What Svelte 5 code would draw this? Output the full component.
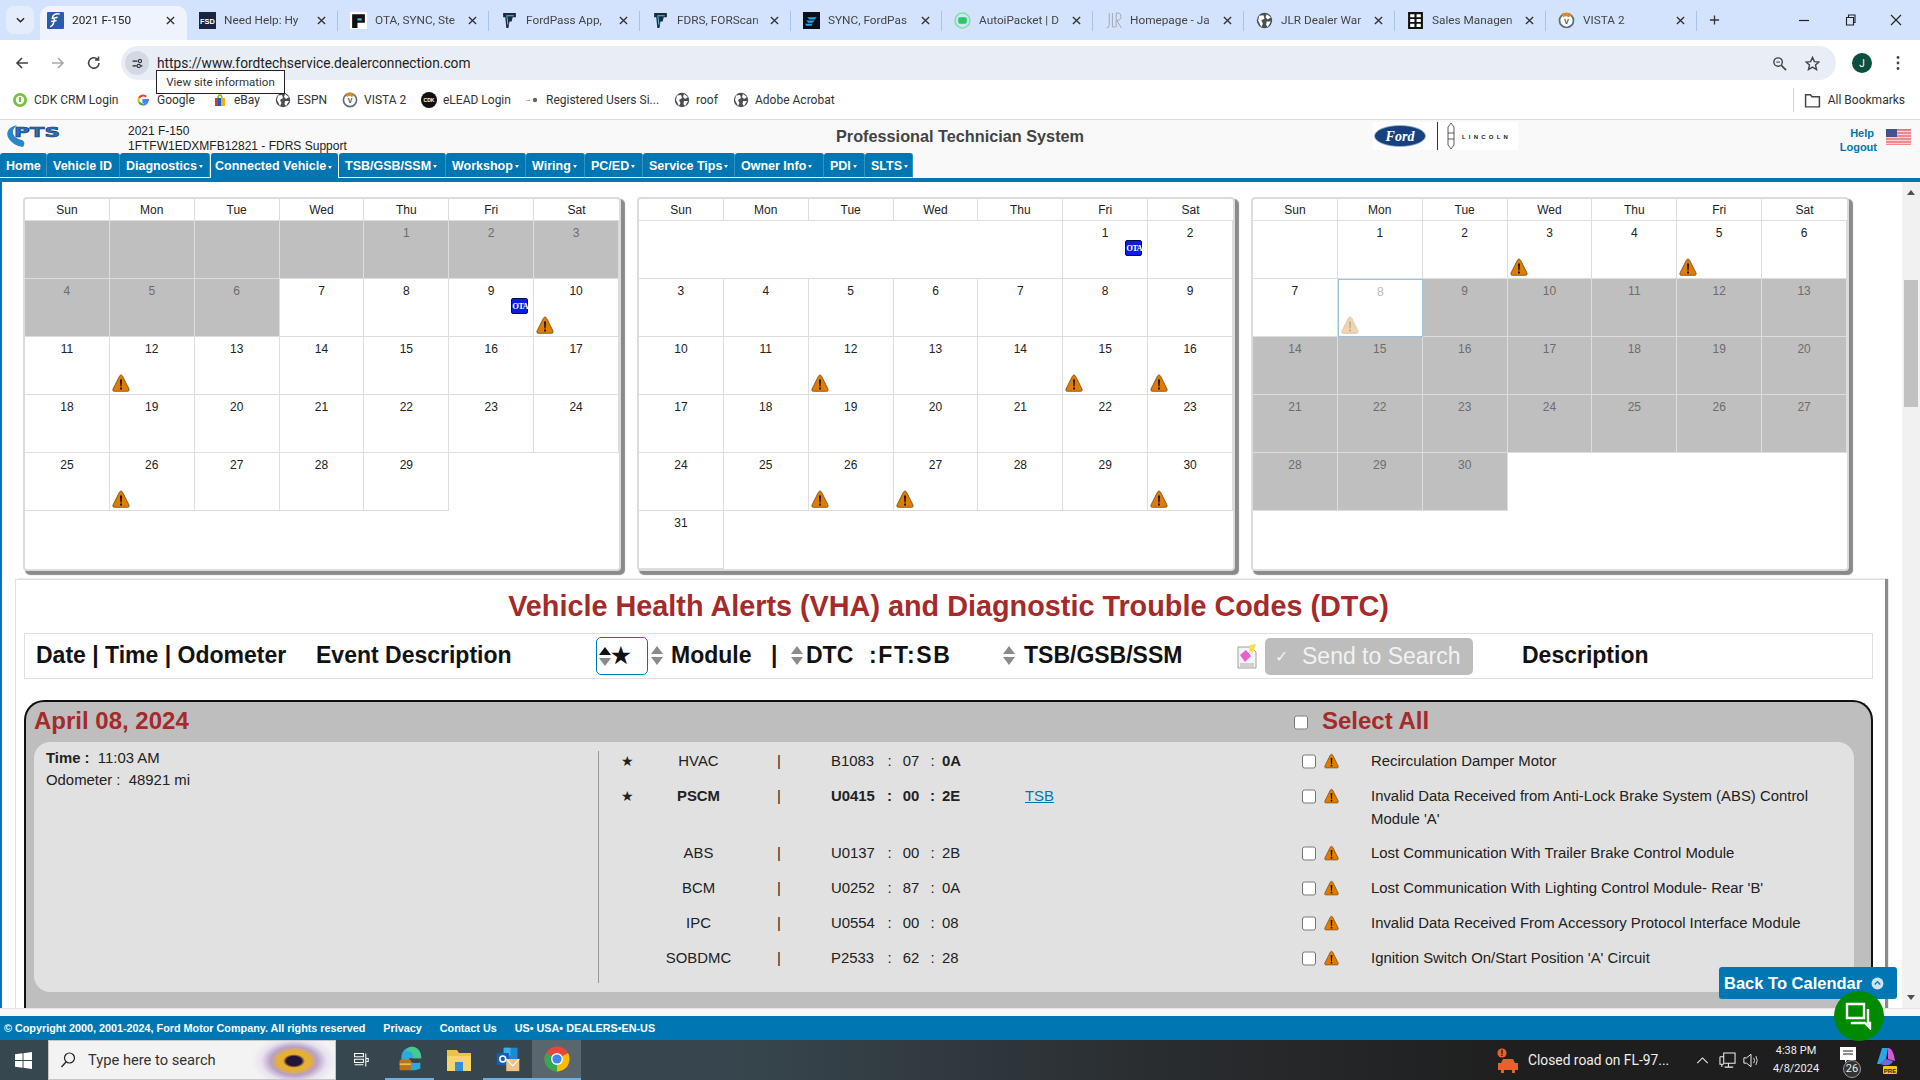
<script>
const tabs = [
  { title: 'Need Help: Hy', fav: 'fsd' },
  { title: 'OTA, SYNC, Ste', fav: 'f-black' },
  { title: 'FordPass App,', fav: 'f-cyan' },
  { title: 'FDRS, FORScan', fav: 'f-cyan' },
  { title: 'SYNC, FordPas', fav: 'sync' },
  { title: 'AutoiPacket | D', fav: 'green' },
  { title: 'Homepage - Ja', fav: 'jlr' },
  { title: 'JLR Dealer War', fav: 'globe' },
  { title: 'Sales Managen', fav: 'grid' },
  { title: 'VISTA 2', fav: 'vista' }
];

const bookmarks = [
  { label: 'CDK CRM Login', fav: 'cdk', w: 123 },
  { label: 'Google', fav: 'google', w: 77 },
  { label: 'eBay', fav: 'ebay', w: 63 },
  { label: 'ESPN', fav: 'globe', w: 67 },
  { label: 'VISTA 2', fav: 'vista', w: 79 },
  { label: 'eLEAD Login', fav: 'cdk-black', w: 103 },
  { label: 'Registered Users Si...', fav: 'dash', w: 150 },
  { label: 'roof', fav: 'globe', w: 59 },
  { label: 'Adobe Acrobat', fav: 'globe', w: 110 }
];

const navItems = [
  { label: 'Home', w: 47 },
  { label: 'Vehicle ID', w: 73 },
  { label: 'Diagnostics', w: 90, caret: true },
  { label: 'Connected Vehicle', w: 129, caret: true, current: true },
  { label: 'TSB/GSB/SSM', w: 107, caret: true },
  { label: 'Workshop', w: 80, caret: true },
  { label: 'Wiring', w: 59, caret: true },
  { label: 'PC/ED', w: 58, caret: true },
  { label: 'Service Tips', w: 92, caret: true },
  { label: 'Owner Info', w: 89, caret: true },
  { label: 'PDI', w: 41, caret: true },
  { label: 'SLTS', w: 48, caret: true }
];

const weekDays = ['Sun', 'Mon', 'Tue', 'Wed', 'Thu', 'Fri', 'Sat'];

function buildMonth(offset, count, isOff, warns, ota, selected, blankOff) {
  const cells = [];
  for (let i = 0; i < offset; i++) {
    cells.push({ day: '', off: blankOff, blank: !blankOff && i < offset - 1 });
  }
  for (let d = 1; d <= count; d++) {
    cells.push({ day: d, off: isOff(d), warn: warns.includes(d), ota: ota.includes(d), selected: d === selected });
  }
  return cells;
}

const months = [
  buildMonth(4, 29, (d) => d < 7, [10, 12, 26], [9], 0, true),
  buildMonth(5, 31, () => false, [12, 15, 16, 26, 27, 30], [1], 0, false),
  buildMonth(1, 30, (d) => d > 8, [3, 5, 8], [], 8, false)
];

const dtcRows = [
  { star: true, module: 'HVAC', dtc: 'B1083', ft: '07', sb: '0A', desc: 'Recirculation Damper Motor', boldSb: true },
  { star: true, module: 'PSCM', dtc: 'U0415', ft: '00', sb: '2E', tsb: true, bold: true, desc: "Invalid Data Received from Anti-Lock Brake System (ABS) Control Module 'A'" },
  { module: 'ABS', dtc: 'U0137', ft: '00', sb: '2B', desc: 'Lost Communication With Trailer Brake Control Module' },
  { module: 'BCM', dtc: 'U0252', ft: '87', sb: '0A', desc: "Lost Communication With Lighting Control Module- Rear 'B'" },
  { module: 'IPC', dtc: 'U0554', ft: '00', sb: '08', desc: 'Invalid Data Received From Accessory Protocol Interface Module' },
  { module: 'SOBDMC', dtc: 'P2533', ft: '62', sb: '28', desc: "Ignition Switch On/Start Position 'A' Circuit" }
];
</script>

{#snippet warnIcon(cls)}
  <svg class={cls} viewBox="0 0 18 18">
    <path d="M9 1 C10 1 10.5 2 11 3 L17 15 C17.5 16.5 16.8 17.3 15.5 17.3 L2.5 17.3 C1.2 17.3 .5 16.5 1 15 L7 3 C7.5 2 8 1 9 1 Z" fill="#e07c00" stroke="#6b4a1c" stroke-width=".8" />
    <path d="M8 5.5 h2 l-.4 7 h-1.2 Z M8.1 13.6 h1.8 v1.9 h-1.8 Z" fill="#111" />
  </svg>
{/snippet}

{#snippet sortArrows(active)}
  <svg class="sort" viewBox="0 0 12 19">
    <path d="M6 0 L12 8 H0 Z" fill={active ? '#111' : '#8a8a8a'} />
    <path d="M6 19 L12 11 H0 Z" fill="#8a8a8a" />
  </svg>
{/snippet}

{#snippet favicon(kind)}
  <svg class="fav" viewBox="0 0 16 16">
    {#if kind === 'ford'}
      <rect width="16" height="16" rx="1" fill="#2a5ca8" />
      <path d="M12 2 C8 1 5 3 5 6 L10 5 M4 9 L9 8 M7 5 C7 9 6 13 3 14" stroke="#fff" stroke-width="1.4" fill="none" />
    {:else if kind === 'fsd'}
      <rect width="16" height="16" fill="#1c2340" />
      <text x="8" y="11" font-size="7" font-weight="700" text-anchor="middle" fill="#fff" font-family="Liberation Sans">FSD</text>
    {:else if kind === 'f-black'}
      <rect width="16" height="16" fill="#fff" />
      <path d="M2 2 H14 V10 H7 V15 H2 Z" fill="#111" />
      <path d="M7 6 H11 V8 H7 Z" fill="#3fc5e8" />
    {:else if kind === 'f-cyan'}
      <path d="M2 1 H14 V5 H11 L10 9 H8 L7 15 H5 L4 5 H2 Z" fill="#1c2b38" />
      <path d="M5 3 H12 V4 H6 L7 12 H6 Z" fill="#48c8e8" />
    {:else if kind === 'sync'}
      <rect width="16" height="16" fill="#0b0f1c" />
      <path d="M4 5 H13 L11 7 H6 Z M3 8 H11 L9 10 H5 Z M2 11 H9 L8 13 H3 Z" fill="#28a8e0" />
    {:else if kind === 'green'}
      <circle cx="8" cy="8" r="7" fill="none" stroke="#7ee2a0" stroke-width="1.5" />
      <rect x="4" y="5" width="8" height="6" rx="1.5" fill="#25c95f" />
    {:else if kind === 'jlr'}
      <path d="M4 1 V12 Q4 15 1.5 15 M7 1 V14 H10 M10.5 14 V1 H13 Q15 1 15 4.5 Q15 8 11 8 L15.5 15" fill="none" stroke="#a2a8b0" stroke-width=".9" />
    {:else if kind === 'globe'}
      <circle cx="8" cy="8" r="7.2" fill="#4b4f54" />
      <path d="M3 3.5 L7 3 L8 6 L5 8 L6.5 11 L5 14 L2 8 Z M10 2 L14 5 L11 7 L9 5 Z M10 9 L14 9 L11 14 L9.5 12 Z" fill="#fff" />
    {:else if kind === 'grid'}
      <rect x="1" width="14" height="16" fill="#111" />
      <path d="M3 2 h4 v3 h-4 Z M9 2 h4 v3 h-4 Z M3 6.5 h4 v3 h-4 Z M9 6.5 h4 v3 h-4 Z M3 11 h4 v3 h-4 Z M9 11 h4 v3 h-4 Z" fill="#fff" />
    {:else if kind === 'vista'}
      <circle cx="8" cy="8" r="6.6" fill="#fff" stroke="#5d6a78" stroke-width="1.6" />
      <path d="M3 2 A8 8 0 0 1 13 3 L10 5 A4 4 0 0 0 5 5 Z" fill="#d98a2b" />
      <text x="8" y="11" font-size="7" font-weight="700" text-anchor="middle" fill="#3b4a5a" font-family="Liberation Sans">V</text>
    {:else if kind === 'cdk'}
      <circle cx="8" cy="8" r="7" fill="#7ac043" />
      <circle cx="8" cy="8" r="4.2" fill="#fff" />
      <path d="M7 5 h2 v5 h-2 Z" fill="#7ac043" />
    {:else if kind === 'google'}
      <path d="M14 8 H8.5 V10 H12 A4.2 4.2 0 0 1 8 12.5" fill="none" stroke="#4285f4" stroke-width="2.2" />
      <path d="M8 12.5 A4.6 4.6 0 0 1 4 10.2" fill="none" stroke="#34a853" stroke-width="2.2" />
      <path d="M4 10.2 A4.6 4.6 0 0 1 4 5.8" fill="none" stroke="#fbbc05" stroke-width="2.2" />
      <path d="M4 5.8 A4.6 4.6 0 0 1 11.2 4.8" fill="none" stroke="#ea4335" stroke-width="2.2" />
    {:else if kind === 'ebay'}
      <path d="M3 6 h4 v8 h-4 Z" fill="#e53238" />
      <path d="M6 6 h4 v8 h-4 Z" fill="#0064d2" />
      <path d="M9 6 h4 v8 h-4 Z" fill="#f5af02" />
      <path d="M6 6 a2 3 0 0 1 4 0" fill="none" stroke="#86b817" stroke-width="1.4" />
    {:else if kind === 'cdk-black'}
      <circle cx="8" cy="8" r="8" fill="#111" />
      <text x="8" y="10" font-size="5" font-weight="700" text-anchor="middle" fill="#fff" font-family="Liberation Sans">CDK</text>
    {:else if kind === 'dash'}
      <path d="M1 9 L6 7.5 L6 9 Z" fill="#9aa0a6" />
      <circle cx="11" cy="8" r="2.2" fill="#5e6b52" />
    {/if}
  </svg>
{/snippet}

{#snippet closeX()}
  <svg class="close" viewBox="0 0 10 10"><path d="M1 1 L9 9 M9 1 L1 9" stroke="#333" stroke-width="1.5" fill="none" /></svg>
{/snippet}

<div class="screen">
  <div class="tabstrip">
    <div class="tabmenu">
      <svg viewBox="0 0 10 6"><path d="M1 1 L5 5 L9 1" fill="none" stroke="#222" stroke-width="1.5" /></svg>
    </div>
    <div class="tab active">
      {@render favicon('ford')}
      <span class="tabtitle">2021 F-150</span>
      {@render closeX()}
    </div>
    {#each tabs as tab}
      <div class="tab">
        {@render favicon(tab.fav)}
        <span class="tabtitle">{tab.title}</span>
        {@render closeX()}
      </div>
    {/each}
    <svg class="newtab" viewBox="0 0 12 12"><path d="M6 1 V11 M1 6 H11" stroke="#333" stroke-width="1.4" /></svg>
    <div class="winctrls">
      <svg viewBox="0 0 12 12"><path d="M1 6.5 H11" stroke="#222" stroke-width="1.2" /></svg>
      <svg viewBox="0 0 12 12"><path d="M2.5 3.5 H9.5 V11 H2.5 Z M4.5 3.5 V1 H11 V8.5 H9.5" fill="none" stroke="#222" stroke-width="1.1" /></svg>
      <svg viewBox="0 0 12 12"><path d="M1 1 L11 11 M11 1 L1 11" stroke="#222" stroke-width="1.1" /></svg>
    </div>
  </div>

  <div class="toolbar">
    <svg class="navicon" viewBox="0 0 16 16"><path d="M14 8 H3 M8 3 L3 8 L8 13" fill="none" stroke="#444" stroke-width="1.6" /></svg>
    <svg class="navicon" viewBox="0 0 16 16"><path d="M2 8 H13 M8 3 L13 8 L8 13" fill="none" stroke="#a9a9a9" stroke-width="1.6" /></svg>
    <svg class="navicon" viewBox="0 0 16 16"><path d="M13 8 A5.2 5.2 0 1 1 11.4 4.2 M12.5 1.5 V5 H9" fill="none" stroke="#444" stroke-width="1.6" /></svg>
    <div class="omnibox">
      <span class="siteinfo">
        <svg viewBox="0 0 16 16"><path d="M2 5 H8 M2 11 H7 M12 11 H14" stroke="#222" stroke-width="1.4" /><circle cx="11" cy="5" r="2" fill="none" stroke="#222" stroke-width="1.3" /><circle cx="9.5" cy="11" r="2" fill="none" stroke="#222" stroke-width="1.3" /></svg>
      </span>
      <span class="url">https://www.fordtechservice.dealerconnection.com</span>
      <svg class="omniicon" viewBox="0 0 16 16"><circle cx="6.5" cy="6.5" r="4.5" fill="none" stroke="#444" stroke-width="1.5" /><path d="M10 10 L15 15" stroke="#444" stroke-width="1.8" /><path d="M4.5 6.5 H8.5" stroke="#444" stroke-width="1.1" /></svg>
      <svg class="omniicon" viewBox="0 0 16 16"><path d="M8 1.5 L10 6 L14.8 6.4 L11.2 9.6 L12.3 14.4 L8 11.8 L3.7 14.4 L4.8 9.6 L1.2 6.4 L6 6 Z" fill="none" stroke="#444" stroke-width="1.5" /></svg>
    </div>
    <span class="avatar">J</span>
    <svg class="menudots" viewBox="0 0 4 16"><circle cx="2" cy="2.5" r="1.4" fill="#444" /><circle cx="2" cy="8" r="1.4" fill="#444" /><circle cx="2" cy="13.5" r="1.4" fill="#444" /></svg>
  </div>

  <div class="bookmarks">
    {#each bookmarks as mark}
      <div class="bookmark" style="width:{mark.w}px">
        {@render favicon(mark.fav)}
        <span>{mark.label}</span>
      </div>
    {/each}
    <div class="allmarks">
      <svg viewBox="0 0 16 16"><path d="M1.5 2.5 H6 L7.5 4.5 H14.5 V14 H1.5 Z" fill="none" stroke="#444" stroke-width="1.4" /></svg>
      <span>All Bookmarks</span>
    </div>
  </div>

  <div class="pageheader">
    <div class="pts">
      <svg viewBox="0 0 56 26">
        <path d="M12 3 C3 5 0 11 4 17 C7 21 11 24 18 25 C20 22 20 20 17 18 C11 17 7 13 8 9 C8 7 10 5 12 3 Z" fill="#2a86c8" />
        <text x="9" y="15" font-size="14" font-weight="700" fill="#2a6fb8" stroke="#12366a" stroke-width=".6" font-family="DejaVu Sans" textLength="46" lengthAdjust="spacingAndGlyphs">PTS</text>
      </svg>
    </div>
    <div class="vehicle">
      <div>2021 F-150</div>
      <div>1FTFW1EDXMFB12821 - FDRS Support</div>
    </div>
    <div class="systitle">Professional Technician System</div>
    <div class="brands">
      <svg class="ford" viewBox="0 0 52 22">
        <ellipse cx="26" cy="11" rx="25.5" ry="10.5" fill="#15427e" stroke="#9bb3cc" stroke-width=".8" />
        <text x="26" y="16" font-size="14" font-style="italic" font-weight="700" text-anchor="middle" fill="#fff" font-family="Liberation Serif">Ford</text>
      </svg>
      <span class="branddivider"></span>
      <svg class="lincoln" viewBox="0 0 72 28">
        <path d="M6 1 L9 5 V23 L6 27 L3 23 V5 Z M3 11 H9 M3 17 H9" fill="none" stroke="#333" stroke-width=".8" />
        <text x="17" y="17" font-size="6" font-weight="700" letter-spacing="3.2" fill="#222" font-family="Liberation Sans">LINCOLN</text>
      </svg>
    </div>
    <div class="helplinks">
      <span class="helplink">Help</span>
      <span>Logout</span>
    </div>
    <svg class="flag" viewBox="0 0 25 16">
      <rect width="25" height="16" fill="#e8727a" />
      <path d="M0 2.5 H25 M0 5.5 H25 M0 8.5 H25 M0 11.5 H25 M0 14.5 H25" stroke="#f5d3d3" stroke-width="1.3" />
      <rect width="11" height="8" fill="#46508c" />
    </svg>
  </div>

  <nav class="nav">
    {#each navItems as item}
      <div class="navitem" class:current={item.current} style="width:{item.w}px">
        {item.label}{#if item.caret}<span class="caret"></span>{/if}
      </div>
    {/each}
  </nav>
  <div class="navrule"></div>

  <div class="middle">
    <div class="page">
      <div class="calendars">
        {#each months as cells}
          <div class="calendar">
            {#each weekDays as name}
              <div class="weekday">{name}</div>
            {/each}
            {#each cells as cell}
              <div class="day" class:off={cell.off} class:blank={cell.blank} class:selected={cell.selected}>
                <span class="num">{cell.day}</span>
                {#if cell.ota}<span class="ota">OTA</span>{/if}
                {#if cell.warn}{@render warnIcon('calwarn')}{/if}
              </div>
            {/each}
          </div>
        {/each}
      </div>

      <section class="vha">
        <h1>Vehicle Health Alerts (VHA) and Diagnostic Trouble Codes (DTC)</h1>
        <div class="sortbar">
          <span>Date | Time | Odometer</span>
          <span>Event Description</span>
          <span class="starbtn">{@render sortArrows(true)}<span class="bigstar">★</span></span>
          <span class="sorted modhead">{@render sortArrows(false)}Module</span>
          <span>|</span>
          <span class="sorted">{@render sortArrows(false)}DTC</span>
          <span class="ftsb">:FT:SB</span>
          <span class="sorted tsbhead">{@render sortArrows(false)}TSB/GSB/SSM</span>
          <svg class="searchdoc" viewBox="0 0 20 26">
            <path d="M1 4 H14 L19 9 V25 H1 Z" fill="#f4f4f4" stroke="#8b8b8b" stroke-width=".8" />
            <path d="M3 12 L9 7 L14 13 L8 19 Z" fill="#e860c8" />
            <path d="M13 2 L19 1 L16 10 L12 8 Z" fill="#f4e14a" />
            <path d="M3 21 H17 M3 23 H17" stroke="#999" stroke-width=".8" />
          </svg>
          <span class="sendbtn"><span class="tick">✓</span>Send to Search</span>
          <span>Description</span>
        </div>

        <div class="eventpanel">
          <div class="eventtop">
            <span class="eventdate">April 08, 2024</span>
            <label class="selectall"><input type="checkbox" />Select All</label>
          </div>
          <div class="eventbody">
            <div class="eventmeta">
              <div><b>Time :</b>&nbsp; 11:03 AM</div>
              <div>Odometer :&nbsp; 48921 mi</div>
            </div>
            <div class="dtcrows">
              {#each dtcRows as row}
                <div class="dtcrow" class:bold={row.bold}>
                  <span class="starcell">{row.star ? '★' : ''}</span>
                  <span class="modcell">{row.module}</span>
                  <span class="pipecell">|</span>
                  <span>{row.dtc}</span>
                  <span class="colon">:</span>
                  <span class="ftcell">{row.ft}</span>
                  <span class="colon">:</span>
                  <span class="sbcell" class:boldsb={row.boldSb}>{row.sb}</span>
                  <span class="tsbcell">{#if row.tsb}<a href="#tsb">TSB</a>{/if}</span>
                  <span class="boxcell"><input type="checkbox" /></span>
                  <span class="warncell">{@render warnIcon('rowwarn')}</span>
                  <span class="desccell">{row.desc}</span>
                </div>
              {/each}
            </div>
          </div>
        </div>
      </section>
    </div>

    <div class="scrollbar">
      <svg viewBox="0 0 10 6"><path d="M5 0 L10 6 H0 Z" fill="#505050" /></svg>
      <div class="track"><div class="thumb"></div></div>
      <svg viewBox="0 0 10 6"><path d="M5 6 L10 0 H0 Z" fill="#505050" /></svg>
    </div>
  </div>
  <div class="gapstrip"></div>

  <footer class="footer">
    <b>© Copyright 2000, 2001-2024, Ford Motor Company. All rights reserved</b>
    <b>Privacy</b>
    <b>Contact Us</b>
    <b>US• USA• DEALERS•EN-US</b>
  </footer>

  <div class="taskbar">
    <svg class="winlogo" viewBox="0 0 18 18"><path d="M0 2.5 L8 1.3 V8.5 H0 Z M9 1.2 L18 0 V8.5 H9 Z M0 9.5 H8 V16.7 L0 15.5 Z M9 9.5 H18 V18 L9 16.8 Z" fill="#fff" /></svg>
    <div class="tasksearch">
      <svg viewBox="0 0 16 16"><circle cx="9.5" cy="6" r="5" fill="none" stroke="#222" stroke-width="1.2" /><path d="M6 10 L1.5 15" stroke="#222" stroke-width="1.3" /></svg>
      <span>Type here to search</span>
    </div>
    <div class="taskapp taskview"><svg viewBox="0 0 20 20"><path d="M2 2 H13 V6 H2 Z M2 9 H13 V13 H2 Z M2 16 H13 M16 2 V18 M16 8 H19 V12 H16 Z" fill="none" stroke="#fff" stroke-width="1.3" /></svg></div>
    <div class="taskapp open">
      <svg viewBox="0 0 26 30">
        <path d="M3 14 C3 5 10 1 15 1 C22 1 26 7 26 14 L12 14 C12 18 16 21 25 19 L25 26 C15 31 3 27 3 14 Z" fill="#2fa9d8" />
        <path d="M15 1 C22 1 26 7 26 14 L17 14 C17 9 14 5 8 6 C10 3 12 1 15 1 Z" fill="#45c98e" />
        <rect x="1" y="16" width="13" height="12" rx="1" fill="#b8741d" />
        <rect x="1" y="20" width="13" height="2" fill="#e8c14a" />
      </svg>
    </div>
    <div class="taskapp">
      <svg viewBox="0 0 26 26"><path d="M1 3 H11 L13 6 H25 V24 H1 Z" fill="#f1c048" /><rect x="1" y="9" width="24" height="15" fill="#f7d56c" /><path d="M9 24 V15 H17 V24 Z" fill="#2f8fd8" /></svg>
    </div>
    <div class="taskapp open">
      <svg viewBox="0 0 28 30"><rect x="9" y="2" width="16" height="18" fill="#1a8ad4" /><rect x="9" y="2" width="8" height="9" fill="#38b0e8" /><rect x="1" y="8" width="14" height="14" rx="1" fill="#0d62b8" /><circle cx="8" cy="15" r="3.4" fill="none" stroke="#fff" stroke-width="1.8" /><rect x="12" y="15" width="15" height="14" fill="#eec38a" /><path d="M12 15 L19.5 23 L27 15" fill="none" stroke="#fff" stroke-width="1.2" /></svg>
    </div>
    <div class="taskapp open focused">
      <svg viewBox="0 0 26 26">
        <circle cx="13" cy="13" r="12.5" fill="#e8453c" />
        <path d="M13 13 L24 7 A12.5 12.5 0 0 1 13 25.5 Z" fill="#fbbc05" />
        <path d="M13 13 L13 25.5 A12.5 12.5 0 0 1 2 7 Z" fill="#34a853" />
        <circle cx="13" cy="13" r="6" fill="#fff" />
        <circle cx="13" cy="13" r="4.6" fill="#4285f4" />
      </svg>
    </div>

    <div class="tray">
      <svg class="roadicon" viewBox="0 0 22 25">
        <circle cx="5" cy="5" r="4.6" fill="#e8602c" />
        <rect x="4.2" y="1.8" width="1.6" height="4" fill="#2a2a2a" /><rect x="4.2" y="6.6" width="1.6" height="1.4" fill="#2a2a2a" />
        <path d="M4 15 L6 11 H16 L18 15 H21 V22 H18 V25 H15 V22 H7 V25 H4 V22 H1 V15 Z" fill="#e8602c" />
      </svg>
      <span class="roadtext">Closed road on FL-97...</span>
      <svg class="trayicon chev" viewBox="0 0 14 8"><path d="M1 7 L7 1 L13 7" fill="none" stroke="#eee" stroke-width="1.2" /></svg>
      <svg class="trayicon net" viewBox="0 0 18 18"><path d="M5 1 H17 V12 H5 Z M1 5 H5 M1 5 V13 H5 M3 13 V16 M10 12 V16 M6 16 H15" fill="none" stroke="#eee" stroke-width="1.1" /></svg>
      <svg class="trayicon vol" viewBox="0 0 18 18"><path d="M1 6 H4 L9 2 V16 L4 12 H1 Z" fill="none" stroke="#eee" stroke-width="1.1" /><path d="M12 6 Q14 9 12 12 M14.5 4 Q17.5 9 14.5 14" fill="none" stroke="#eee" stroke-width="1" /></svg>
      <div class="clock"><span>4:38 PM</span><span>4/8/2024</span></div>
      <div class="notify">
        <svg viewBox="0 0 18 18"><path d="M1 1 H17 V14 H8 L6 17 V14 H1 Z" fill="#fff" /><path d="M4 5 H14 M4 8 H14" stroke="#222" stroke-width="1.1" /></svg>
        <span class="notifycount">26</span>
      </div>
      <svg class="copilot" viewBox="0 0 22 28">
        <path d="M7 2 H13 L11 13 L5 18 H2 Z" fill="#29a7e6" />
        <path d="M13 2 C17 2 19 8 20 15 L13 13 Z" fill="#d25ad8" />
        <path d="M5 18 L11 13 L18 15 C16 20 11 20 5 18 Z" fill="#7a63e0" />
        <rect x="8" y="20" width="14" height="8" rx="1" fill="#f3c623" />
        <text x="15" y="26.5" font-size="6" font-weight="700" text-anchor="middle" fill="#222" font-family="Liberation Sans">PRE</text>
      </svg>
    </div>
  </div>

  <div class="tooltip">View site information</div>
  <div class="backtocal">Back To Calendar
    <svg viewBox="0 0 14 14"><circle cx="7" cy="7" r="6.4" fill="#cfe4f0" /><path d="M4 8 L7 5 L10 8" fill="none" stroke="#0077b3" stroke-width="1.4" /></svg>
  </div>
  <div class="chat">
    <svg viewBox="0 0 28 28"><path d="M2 2 H19 V16 H2 Z M23 7 V21 H25 V26 L20 21 H7 V20" fill="none" stroke="#fff" stroke-width="2.4" /></svg>
  </div>
</div>

<style>
:global(body) {
  margin: 0;
  overflow: hidden;
}
.screen {
  position: relative;
  width: 1920px;
  height: 1080px;
  display: flex;
  flex-direction: column;
  overflow: hidden;
  font-family: "Liberation Sans", Arial, sans-serif;
  color: #222;
  background: #fff;
}

/* browser chrome */
.tabstrip {
  height: 40px;
  display: flex;
  align-items: stretch;
  background: #d3e3fd;
  flex: none;
}
.tabmenu {
  width: 28px;
  height: 28px;
  margin: 6px;
  border-radius: 8px;
  background: #e4edfc;
  display: flex;
  align-items: center;
  justify-content: center;
}
.tabmenu svg {
  width: 9px;
  height: 6px;
}
.tab {
  width: 151px;
  box-sizing: border-box;
  display: flex;
  align-items: center;
  padding: 0 12px;
  font-family: Roboto, sans-serif;
  font-size: 11.8px;
  color: #444;
  position: relative;
}
.tab::after {
  content: "";
  position: absolute;
  right: 0;
  top: 11px;
  height: 20px;
  width: 1px;
  background: #a9c3ea;
}
.tab.active {
  width: 147px;
  background: #eef3fd;
  border-radius: 10px 10px 0 0;
  margin-top: 6px;
  padding: 0 12px 6px 7px;
  color: #222;
}
.tab.active::after {
  display: none;
}
.fav {
  width: 17px;
  height: 17px;
  flex: none;
}
.tabtitle {
  margin-left: 8px;
  flex: 1;
  min-width: 0;
  white-space: nowrap;
  -webkit-mask-image: linear-gradient(90deg, #000 85%, rgba(0, 0, 0, 0.25));
  mask-image: linear-gradient(90deg, #000 85%, rgba(0, 0, 0, 0.25));
}
.close {
  width: 9px;
  height: 9px;
  flex: none;
  margin-left: 3px;
}
.newtab {
  width: 11px;
  margin-left: 12px;
}
.winctrls {
  margin-left: auto;
  display: flex;
  align-items: center;
  gap: 34px;
  padding-right: 18px;
}
.winctrls svg {
  width: 12px;
  height: 12px;
}

.toolbar {
  height: 44px;
  box-sizing: border-box;
  padding: 6px 0 4px 14px;
  display: flex;
  align-items: center;
  background: #fff;
  flex: none;
}
.navicon {
  width: 16px;
  height: 16px;
  margin-right: 20px;
}
.omnibox {
  width: 1715px;
  margin-left: -1px;
  height: 34px;
  border-radius: 17px;
  background: #e9eef6;
  display: flex;
  align-items: center;
  padding-left: 4px;
  box-sizing: border-box;
  flex: none;
}
.siteinfo {
  width: 24px;
  height: 24px;
  border-radius: 50%;
  background: #d4d8e2;
  display: flex;
  align-items: center;
  justify-content: center;
  margin-right: 8px;
}
.siteinfo svg {
  width: 13px;
  height: 13px;
}
.url {
  font-family: Roboto, sans-serif;
  font-size: 13.75px;
  color: #1f1f1f;
  flex: 1;
}
.omniicon {
  width: 15px;
  height: 15px;
  margin-right: 18px;
}
.omniicon:last-child {
  margin-right: 16px;
}
.avatar {
  width: 20px;
  height: 20px;
  margin-left: 16px;
  border-radius: 50%;
  background: #0b4f3e;
  color: #fff;
  font: 10px Roboto, sans-serif;
  display: flex;
  align-items: center;
  justify-content: center;
  flex: none;
}
.menudots {
  width: 4px;
  height: 16px;
  margin-left: 24px;
  flex: none;
}

.bookmarks {
  height: 36px;
  box-sizing: border-box;
  display: flex;
  align-items: center;
  padding: 0 0 3px 12px;
  border-bottom: 1px solid #dcdcdc;
  font-family: Roboto, sans-serif;
  font-size: 12px;
  color: #333;
  flex: none;
}
.bookmark {
  display: flex;
  align-items: center;
  gap: 6px;
  white-space: nowrap;
  flex: none;
}
.bookmark .fav {
  width: 16px;
  height: 16px;
}
.allmarks {
  margin-left: auto;
  display: flex;
  align-items: center;
  gap: 7px;
  padding-right: 15px;
  border-left: 1px solid #c4d5ee;
  padding-left: 10px;
  height: 24px;
}
.allmarks svg {
  width: 17px;
  height: 17px;
}

/* site header */
.pageheader {
  height: 33px;
  box-sizing: border-box;
  background: #f9f9f9;
  display: flex;
  align-items: flex-start;
  padding-top: 2px;
  flex: none;
}
.pts {
  width: 128px;
  padding-left: 5px;
  box-sizing: border-box;
  flex: none;
}
.pts svg {
  width: 56px;
  height: 26px;
}
.vehicle {
  font-size: 12px;
  line-height: 15px;
  color: #222;
  width: 708px;
  padding-top: 2px;
  flex: none;
}
.systitle {
  width: 537px;
  font-size: 16.25px;
  font-weight: 700;
  color: #444;
  padding-top: 5px;
  flex: none;
}
.brands {
  display: flex;
  align-items: center;
  height: 28px;
  background: #fff;
  width: 144px;
  flex: none;
  padding-left: 1px;
}
.ford {
  width: 52px;
  height: 22px;
}
.branddivider {
  width: 1px;
  height: 28px;
  background: #333;
  margin: 0 7px 0 11px;
}
.lincoln {
  width: 72px;
  height: 28px;
}
.helplinks {
  width: 368px;
  box-sizing: border-box;
  padding: 4px 9px 0 0;
  display: flex;
  flex-direction: column;
  align-items: flex-end;
  font-size: 11px;
  font-weight: 700;
  color: #0077b3;
  line-height: 14px;
  flex: none;
}
.helplink {
  padding-right: 3px;
}
.flag {
  width: 25px;
  height: 16px;
  margin-top: 7px;
  flex: none;
}
.nav {
  height: 25px;
  display: flex;
  background: #f9f9f9;
  flex: none;
}
.navitem {
  box-sizing: border-box;
  background: #0077b3;
  color: #fff;
  font-size: 12.5px;
  font-weight: 700;
  display: flex;
  align-items: center;
  padding: 1px 0 0 6px;
  border-bottom: 1px solid #fff;
  border-right: 1px solid #3392c2;
  border-radius: 3px 3px 0 0;
  white-space: nowrap;
  flex: none;
}
.navitem.current {
  border: 1px solid #fff;
  border-top: none;
  height: 26px;
  padding-left: 4px;
}
.caret {
  width: 0;
  height: 0;
  margin-left: 2px;
  border-left: 2.5px solid transparent;
  border-right: 2.5px solid transparent;
  border-top: 3px solid #fff;
  margin-top: 2px;
}
.navrule {
  height: 4px;
  background: #0077b3;
  flex: none;
}

/* scrolling area */
.middle {
  flex: none;
  height: 826px;
  display: flex;
  overflow: hidden;
}
.page {
  flex: 1;
  min-width: 0;
  border-left: 2px solid #0077b3;
  overflow: hidden;
}
.calendars {
  display: flex;
  gap: 16px;
  padding: 15px 0 0 21px;
}
.calendar {
  width: 598px;
  height: 374px;
  box-sizing: border-box;
  flex: none;
  display: grid;
  grid-template-columns: repeat(7, 1fr);
  grid-auto-rows: 58px;
  grid-template-rows: 22px;
  align-content: start;
  border: 2px solid #dcdcdc;
  border-radius: 4px;
  box-shadow: 3px 3px 1px 1px #8a8a8a;
  background: #fff;
  font-size: 12px;
}
.weekday {
  display: flex;
  align-items: center;
  justify-content: center;
  color: #222;
  border-right: 1px solid #ddd;
  border-bottom: 1px solid #ddd;
  box-sizing: border-box;
}
.weekday:nth-child(7) {
  border-right: none;
}
.day {
  position: relative;
  box-sizing: border-box;
  border-right: 1px solid #ddd;
  border-bottom: 1px solid #ddd;
  text-align: center;
  padding-top: 5px;
  color: #222;
  background: #fff;
}
.day.blank {
  border-right: none;
}
.day.off {
  background: #bfbfc0;
  color: #6d6d6d;
}
.day.selected {
  border: 1.5px solid #9cc3d8;
  color: #bbb;
}
.day.selected .calwarn {
  opacity: 0.33;
}
.num {
  line-height: 14px;
  display: block;
}
.calwarn {
  position: absolute;
  left: 2px;
  bottom: 2px;
  width: 18px;
  height: 18px;
}
.ota {
  position: absolute;
  right: 5px;
  top: 19px;
  width: 17px;
  height: 16px;
  box-sizing: border-box;
  background: #0a1ee0;
  border: 1px solid #0a0a50;
  border-radius: 2px;
  color: #fff;
  font: 700 8.5px/14px "Liberation Serif", serif;
  text-align: center;
  letter-spacing: -0.6px;
}

.vha {
  margin: 8px 0 0 13px;
  width: 1870px;
  box-sizing: border-box;
  border: 1px solid #e0e0e0;
  border-width: 1px 0 0 1px;
  box-shadow: 3px 0 1px #8a8a8a;
  padding: 0 12px 0 8px;
  height: 440px;
}
h1 {
  margin: 0 0 1px;
  height: 52px;
  line-height: 52px;
  text-align: center;
  font-size: 28.8px;
  font-weight: 700;
  color: #a52a2a;
}
.sortbar {
  height: 46px;
  box-sizing: border-box;
  border: 1.5px solid #e0e0e0;
  display: grid;
  grid-template-columns: 280px 280px 55px 120px 20px 78px 134px 234px 28px 257px auto;
  align-items: center;
  padding: 0 0 2px 11px;
  font-size: 23px;
  font-weight: 700;
  color: #111;
  white-space: nowrap;
}
.sorted {
  display: flex;
  align-items: center;
}
.sort {
  width: 12px;
  height: 19px;
  margin-right: 3px;
  flex: none;
}
.modhead .sort {
  margin-right: 8px;
}
.tsbhead .sort {
  margin-right: 9px;
}
.ftsb {
  letter-spacing: 1.6px;
}
.starbtn {
  width: 52px;
  height: 38px;
  box-sizing: border-box;
  border: 1px solid #0077b3;
  border-radius: 5px;
  display: flex;
  align-items: center;
  padding-left: 2px;
  margin-top: 2px;
}
.starbtn .sort {
  margin-right: 0;
}
.bigstar {
  font-size: 22px;
  line-height: 1;
}
.searchdoc {
  width: 20px;
  height: 26px;
  margin-top: 2px;
}
.sendbtn {
  width: 208px;
  height: 37px;
  border-radius: 5px;
  background: #bdbdbd;
  color: #f2f2f2;
  font-weight: 400;
  font-size: 23px;
  display: flex;
  align-items: center;
  padding-left: 10px;
  box-sizing: border-box;
  margin-top: 2px;
}
.tick {
  font-size: 16px;
  margin-right: 14px;
}
.eventpanel {
  margin-top: 21px;
  border-top: 2px solid #111;
  border-left: 2px solid #111;
  border-right: 2px solid #111;
  border-radius: 20px 20px 0 0;
  background: #bebebe;
  height: 340px;
  box-sizing: border-box;
  padding: 0 17px 0 8px;
}
.eventtop {
  height: 40px;
  box-sizing: border-box;
  padding-bottom: 3px;
  display: flex;
  align-items: center;
  justify-content: space-between;
  font-size: 24px;
  font-weight: 700;
  color: #a52a2a;
}
.selectall {
  display: flex;
  align-items: center;
  width: 560px;
  box-sizing: border-box;
}
.selectall input {
  width: 14px;
  height: 15px;
  margin: 4px 14px 0 0;
}
.eventbody {
  height: 250px;
  background: #e1e1e1;
  border-radius: 16px;
  display: flex;
  font-size: 14.9px;
  color: #222;
}
.eventmeta {
  width: 565px;
  box-sizing: border-box;
  padding-left: 12px;
  line-height: 22px;
  flex: none;
  height: 232px;
  border-right: 1px solid #9a9a9a;
  margin-top: 9px;
}
.eventmeta div:first-child {
  margin-top: -4px;
}
.dtcrows {
  padding-top: 2px;
  flex: 1;
}
.dtcrow {
  display: grid;
  grid-template-columns: 56px 87px 89px 54px 9px 34px 9px 88px 277px 20px 49px 448px;
  padding: 6px 0;
  line-height: 23px;
  align-items: start;
}
.dtcrow.bold {
  padding-bottom: 5px;
}
.dtcrow.bold > span:not(.desccell):not(.tsbcell):not(.pipecell):not(.starcell) {
  font-weight: 700;
}
.boldsb {
  font-weight: 700;
}
.starcell {
  text-align: center;
  font-size: 14px;
}
.modcell,
.colon,
.ftcell {
  text-align: center;
}
.pipecell {
  padding-left: 35px;
  color: #222;
}
.sbcell {
  padding-left: 5px;
}
.tsbcell a {
  color: #0077b3;
}
.boxcell {
  height: 23px;
}
.boxcell input {
  display: block;
  width: 14px;
  height: 15px;
  margin: 4px 0 0;
}
.warncell {
  height: 23px;
  padding-left: 2px;
}
.rowwarn {
  width: 15px;
  height: 16px;
  margin-top: 3px;
  display: block;
}
.gapstrip {
  height: 8px;
  background: #f7f7f7;
  border-top: 1px solid #e4e4e4;
  box-sizing: border-box;
  flex: none;
}

.scrollbar {
  width: 18px;
  background: #f1f1f1;
  display: flex;
  flex-direction: column;
  align-items: center;
  padding: 8px 0;
  box-sizing: border-box;
  flex: none;
}
.scrollbar svg {
  width: 8px;
  height: 5px;
  flex: none;
}
.track {
  flex: 1;
  width: 100%;
  padding-top: 85px;
  box-sizing: border-box;
}
.thumb {
  height: 127px;
  margin: 0 2px;
  background: #c1c1c1;
}

.footer {
  height: 24px;
  background: #0077b3;
  color: #fff;
  display: flex;
  align-items: center;
  padding-left: 4px;
  gap: 18px;
  font-size: 10.8px;
  flex: none;
}

/* windows taskbar */
.taskbar {
  height: 40px;
  display: flex;
  align-items: center;
  background: linear-gradient(90deg, #37474f 0, #37464e 38%, #2a2d30 60%, #1e1e1e 80%);
  flex: none;
}
.winlogo {
  width: 17px;
  height: 17px;
  margin: 0 16px 0 15px;
  flex: none;
}
.tasksearch {
  width: 288px;
  height: 40px;
  box-sizing: border-box;
  border: 1px solid #c6c6c6;
  background:
    radial-gradient(ellipse 42px 26px at 245px 20px, #241437 0 18%, #e8b030 26% 38%, #b8a0c8 55%, rgba(220, 210, 235, 0.5) 78%, transparent 100%),
    #f3f3f3;
  display: flex;
  align-items: center;
  padding-left: 11px;
  gap: 12px;
  font-family: Roboto, sans-serif;
  font-size: 14.7px;
  color: #333;
  flex: none;
}
.tasksearch svg {
  width: 16px;
  height: 16px;
}
.taskapp {
  width: 49px;
  height: 40px;
  box-sizing: border-box;
  display: flex;
  align-items: center;
  justify-content: center;
  flex: none;
}
.taskapp svg {
  width: 26px;
  height: 26px;
}
.taskapp.taskview svg {
  width: 16px;
  height: 16px;
}
.taskapp.open {
  border-bottom: 2px solid #6cb0e4;
}
.taskapp.focused {
  background: #5a666e;
}
.tray {
  margin-left: auto;
  display: flex;
  align-items: center;
  color: #eee;
  font-family: Roboto, sans-serif;
}
.roadicon {
  width: 22px;
  height: 25px;
}
.roadtext {
  font-size: 13.8px;
  margin: 0 25px 0 9px;
  width: 143px;
  white-space: nowrap;
}
.trayicon {
  flex: none;
}
.chev {
  width: 13px;
  height: 7px;
  margin-right: 10px;
}
.net {
  width: 17px;
  height: 17px;
  margin-right: 7px;
}
.vol {
  width: 16px;
  height: 17px;
  margin-right: 11px;
}
.clock {
  display: flex;
  flex-direction: column;
  align-items: center;
  font-size: 11px;
  line-height: 18px;
  width: 52px;
}
.notify {
  position: relative;
  margin-left: 17px;
  width: 20px;
  height: 30px;
}
.notify svg {
  width: 18px;
  height: 20px;
}
.notifycount {
  position: absolute;
  left: 4px;
  top: 15px;
  width: 18px;
  height: 18px;
  line-height: 16px;
  border-radius: 50%;
  background: #333;
  border: 1px solid #999;
  font-size: 11px;
  text-align: center;
  box-sizing: border-box;
}
.copilot {
  width: 22px;
  height: 28px;
  margin: 0 23px 0 16px;
}

/* things lying over the page */
.tooltip {
  position: absolute;
  left: 156px;
  top: 70px;
  width: 129px;
  height: 24px;
  box-sizing: border-box;
  border: 1px solid #222;
  background: #fff;
  font: 11.5px/22px Roboto, sans-serif;
  color: #333;
  text-align: center;
}
.backtocal {
  position: absolute;
  left: 1719px;
  top: 967px;
  width: 178px;
  height: 32px;
  box-sizing: border-box;
  border-radius: 3px;
  background: #0077b3;
  color: #fff;
  font-size: 16.5px;
  font-weight: 700;
  display: flex;
  align-items: center;
  padding-left: 5px;
  gap: 9px;
  white-space: nowrap;
}
.backtocal svg {
  width: 13px;
  height: 13px;
}
.chat {
  position: absolute;
  left: 1834px;
  top: 991px;
  width: 50px;
  height: 50px;
  border-radius: 50%;
  background: #008a00;
  display: flex;
  align-items: center;
  justify-content: center;
}
.chat svg {
  width: 28px;
  height: 28px;
}
</style>
